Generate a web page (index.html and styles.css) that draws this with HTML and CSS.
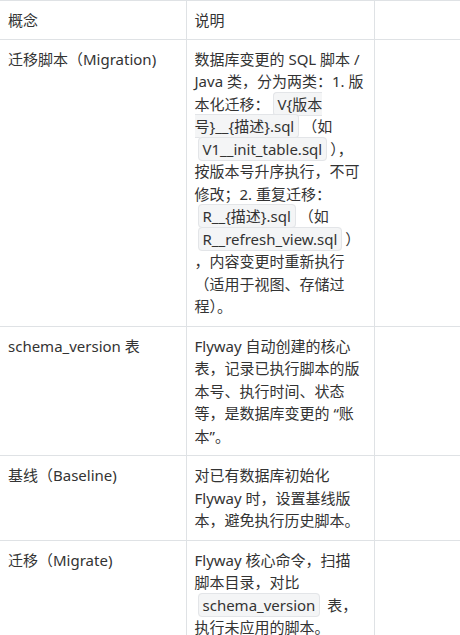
FILE: index.html
```html
<!DOCTYPE html>
<html lang="zh-CN">
<head>
  <meta charset="UTF-8" />
  <meta name="viewport" content="width=device-width, initial-scale=1.0" />
  <title>Flyway 概念</title>
  <link rel="stylesheet" href="styles.css">
</head>
<body>

  <table class="concepts">
    <colgroup>
      <col class="col-name">
      <col class="col-desc">
      <col class="col-extra">
    </colgroup>
    <thead>
      <tr>
        <th>概念</th>
        <th>说明</th>
        <th></th>
      </tr>
    </thead>
    <tbody>
      <tr>
        <td>迁移脚本（Migration)</td>
        <td class="desc">数据库变更的 SQL 脚本 /<br>Java 类，分为两类：1. 版<br>本化迁移：<code>V{版本<br>号}__{描述}.sql</code>（如<br><code>V1__init_table.sql</code>），<br>按版本号升序执行，不可<br>修改；2. 重复迁移：<br><code>R__{描述}.sql</code>（如<br><code>R__refresh_view.sql</code>）<br>，内容变更时重新执行<br>（适用于视图、存储过<br>程）。</td>
        <td></td>
      </tr>
      <tr>
        <td>schema_version 表</td>
        <td class="desc">Flyway 自动创建的核心<br>表，记录已执行脚本的版<br>本号、执行时间、状态<br>等，是数据库变更的 “账<br>本”。</td>
        <td></td>
      </tr>
      <tr>
        <td>基线（Baseline)</td>
        <td class="desc">对已有数据库初始化<br>Flyway 时，设置基线版<br>本，避免执行历史脚本。</td>
        <td></td>
      </tr>
      <tr>
        <td>迁移（Migrate)</td>
        <td class="desc">Flyway 核心命令，扫描<br>脚本目录，对比<br><code>schema_version</code> 表，<br>执行未应用的脚本。</td>
        <td></td>
      </tr>
    </tbody>
  </table>

</body>
</html>
```

FILE: styles.css
```css
* {
  margin: 0;
  padding: 0;
  box-sizing: border-box;
}

body {
  overflow: hidden;
  background: #fff;
  color: #333;
  font-family: 'Noto Sans', 'Noto Sans CJK SC', sans-serif;
  font-size: 15px;
  line-height: 1.5;
}

.concepts {
  border-collapse: collapse;
  table-layout: fixed;
  width: 560px;
}

.col-name { width: 186px; }
.col-desc { width: 188px; }
.col-extra { width: 186px; }

.concepts th,
.concepts td {
  border: 1px solid #dfe2e5;
  padding: 8px 7px 8px 8px;
  text-align: left;
  vertical-align: top;
  font-weight: 400;
}

.concepts th {
  padding-bottom: 7px;
}

.concepts tr > :first-child {
  border-left: none;
}

.desc {
  white-space: nowrap;
}

code {
  font-family: inherit;
  font-size: 15px;
  background: #f4f5f6;
  border: 1px solid #e3e5e8;
  border-radius: 4px;
  padding: 1px 4px;
  margin: 0 3px;
}
```
